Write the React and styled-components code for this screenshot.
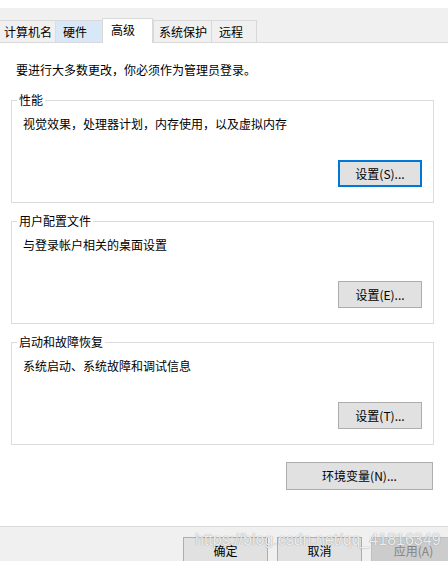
import React from "react";
import styled, { createGlobalStyle } from "styled-components";

const GlobalStyle = createGlobalStyle`
  html, body {
    margin: 0;
    padding: 0;
    background: #ffffff;
  }
  body {
    font-family: "Noto Sans CJK SC", "Microsoft YaHei", sans-serif;
    font-size: 12px;
    color: #000;
  }
`;

const tabs = [
  { label: "计算机名", width: 59, pad: 7 },
  { label: "硬件", width: 47, pad: 7, hover: true },
  { label: "高级", width: 51, pad: 8, active: true },
  { label: "系统保护", width: 58, pad: 5 },
  { label: "远程", width: 46, pad: 7, last: true },
];

const groups = [
  { title: "性能", desc: "视觉效果，处理器计划，内存使用，以及虚拟内存", btn: "设置(S)...", focus: true },
  { title: "用户配置文件", desc: "与登录帐户相关的桌面设置", btn: "设置(E)..." },
  { title: "启动和故障恢复", desc: "系统启动、系统故障和调试信息", btn: "设置(T)..." },
];

const App = () => {
  return (
    <>
      <GlobalStyle />
      <Dialog>
        <TitleEdge />
        <TabStrip>
          <TabRow>
            {tabs.map((t) => (
              <Tab
                key={t.label}
                $width={t.width}
                $pad={t.pad}
                $active={t.active}
                $hover={t.hover}
                $last={t.last}
              >
                {t.label}
              </Tab>
            ))}
          </TabRow>
        </TabStrip>
        <Panel>
          <Intro>要进行大多数更改，你必须作为管理员登录。</Intro>
          {groups.map((g) => (
            <GroupBox key={g.title}>
              <Legend>{g.title}</Legend>
              <GroupDesc>{g.desc}</GroupDesc>
              <SettingsButton $focus={g.focus}>{g.btn}</SettingsButton>
            </GroupBox>
          ))}
          <EnvButton>环境变量(N)...</EnvButton>
        </Panel>
        <BottomBar>
          <DialogButton>确定</DialogButton>
          <DialogButton>取消</DialogButton>
          <DialogButton $disabled>应用(A)</DialogButton>
        </BottomBar>
        <Watermark>https://blog.csdn.net/qq_41816349</Watermark>
      </Dialog>
    </>
  );
};

const Dialog = styled.div`
  position: relative;
  width: 448px;
  height: 561px;
  overflow: hidden;
  display: flex;
  flex-direction: column;
  background: #f0f0f0;
`;

const TitleEdge = styled.div`
  height: 8px;
  flex-shrink: 0;
  background: #ffffff;
`;

const TabStrip = styled.div`
  height: 35px;
  flex-shrink: 0;
  box-sizing: border-box;
  background: #f0f0f0;
  border-bottom: 1px solid #d9d9d9;
  display: flex;
  align-items: flex-end;
`;

const TabRow = styled.div`
  display: flex;
  align-items: flex-end;
  margin-left: -4px;
`;

const Tab = styled.div`
  position: relative;
  z-index: ${(p) => (p.$active ? 1 : 0)};
  box-sizing: border-box;
  width: ${(p) => p.$width}px;
  height: ${(p) => (p.$active ? 25 : 22)}px;
  margin-bottom: ${(p) => (p.$active ? -1 : 0)}px;
  padding-left: ${(p) => p.$pad}px;
  padding-bottom: ${(p) => (p.$active ? 3 : 0)}px;
  display: flex;
  align-items: center;
  white-space: nowrap;
  line-height: 16px;
  background: ${(p) => (p.$active ? "#ffffff" : p.$hover ? "#d8e8f8" : "#f0f0f0")};
  border-top: 1px solid #d9d9d9;
  border-left: 1px solid ${(p) => (p.$hover ? "#cfe0f2" : "#d9d9d9")};
  border-right: ${(p) => (p.$active || p.$last ? "1px solid #d9d9d9" : "none")};
`;

const Panel = styled.div`
  height: 484px;
  flex-shrink: 0;
  box-sizing: border-box;
  background: #ffffff;
  border-bottom: 1px solid #d9d9d9;
  display: flex;
  flex-direction: column;
`;

const Intro = styled.div`
  margin: 19px 0 4px 16px;
  line-height: 16px;
`;

const GroupBox = styled.div`
  box-sizing: border-box;
  margin: 18px 0 0 11px;
  width: 423px;
  height: 103px;
  border: 1px solid #dcdcdc;
  display: flex;
  flex-direction: column;
`;

const Legend = styled.div`
  align-self: flex-start;
  margin: -9px 0 0 5px;
  padding: 0 2px;
  line-height: 16px;
  background: #ffffff;
`;

const GroupDesc = styled.div`
  margin: 8px 0 0 11px;
  line-height: 16px;
`;

const Button = styled.div`
  box-sizing: border-box;
  display: flex;
  align-items: center;
  justify-content: center;
  flex-shrink: 0;
  height: 27px;
  background: #e1e1e1;
  border: 1px solid #adadad;
  color: #000;
  line-height: 16px;
  white-space: nowrap;
`;

const SettingsButton = styled(Button)`
  align-self: flex-end;
  width: 84px;
  margin: auto 11px 15px 0;
  border: ${(p) => (p.$focus ? "2px solid #0078d7" : "1px solid #adadad")};
`;

const EnvButton = styled(Button)`
  align-self: flex-end;
  width: 147px;
  height: 28px;
  margin: 17px 15px 0 0;
`;

const BottomBar = styled.div`
  display: flex;
  gap: 9px;
  padding: 10px 0 0 183px;
`;

const DialogButton = styled(Button)`
  width: 85px;
  background: ${(p) => (p.$disabled ? "#cccccc" : "#e1e1e1")};
  border-color: ${(p) => (p.$disabled ? "#bfbfbf" : "#adadad")};
  color: ${(p) => (p.$disabled ? "#838383" : "#000")};
`;

const Watermark = styled.div`
  position: absolute;
  left: 195px;
  top: 531px;
  font-family: "Liberation Sans", Arial, sans-serif;
  font-size: 16px;
  line-height: 18px;
  color: rgba(255, 255, 255, 0.85);
  text-shadow: 0 0 1px rgba(90, 90, 90, 0.7);
  white-space: nowrap;
  pointer-events: none;
`;

export default App;
